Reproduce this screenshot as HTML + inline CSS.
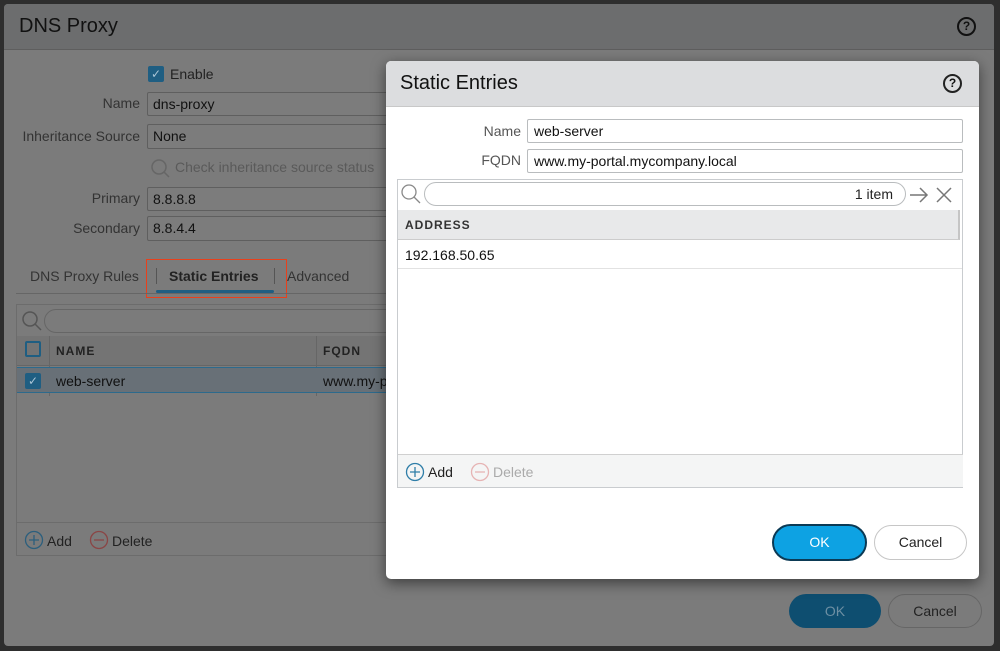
<!DOCTYPE html>
<html><head><style>
*{box-sizing:border-box;margin:0;padding:0}
body{width:1000px;height:651px;background:#2e2e2e;font-family:"Liberation Sans",sans-serif;position:relative;overflow:hidden;color:#111}
.abs{position:absolute}
#main{left:4px;top:4px;width:990px;height:642px;background:#7b7b7b;border-radius:4px;overflow:hidden}
#mhead{left:0;top:0;width:990px;height:46px;background:#6c6d6e;border-bottom:1px solid #5e5e5e}
.lbl{font-size:14px;color:#333;text-align:right}
.inp{background:#7c7c7c;border:1px solid #5f5f5f;border-radius:2px;font-size:14px;padding:3px 5px;color:#111}
.q{width:19px;height:19px;border:2px solid #222;border-radius:50%;font-size:12px;font-weight:bold;text-align:center;line-height:15px}
#modal{left:386px;top:61px;width:593px;height:518px;background:#fff;border-radius:5px;box-shadow:0 4px 14px rgba(0,0,0,.5);overflow:hidden}
#mh2{left:0;top:0;width:593px;height:46px;background:#dcdddf;border-bottom:1px solid #c8c8c8}
.minp{background:#fff;border:1px solid #b9bcbe;border-radius:2px;font-size:14px;padding:3px 6px;color:#111;height:24px}
</style></head><body>
<div id="main" class="abs">
 <div id="mhead" class="abs"><div class="abs" style="left:15px;top:11px;font-size:20px;color:#111">DNS Proxy</div>
 <div class="abs q" style="left:953px;top:13px;border-color:#111;color:#111">?</div></div>
 <div class="abs" style="left:144px;top:62px;width:16px;height:16px;background:#1f5e82;border-radius:2px;color:#a9c4d6;font-size:12px;text-align:center;line-height:16px">✓</div>
 <div class="abs" style="left:166px;top:62px;font-size:14px;color:#222">Enable</div>
 <div class="abs lbl" style="left:0;top:91px;width:136px">Name</div>
 <div class="abs inp" style="left:143px;top:88px;width:260px;height:24px">dns-proxy</div>
 <div class="abs lbl" style="left:0;top:124px;width:136px">Inheritance Source</div>
 <div class="abs inp" style="left:143px;top:120px;width:260px;height:25px">None</div>
 <svg class="abs" style="left:146px;top:154px" width="22" height="22"><circle cx="9" cy="9" r="7" fill="none" stroke="#666" stroke-width="1.5"/><line x1="14" y1="14" x2="19" y2="19" stroke="#666" stroke-width="1.5"/></svg>
 <div class="abs" style="left:171px;top:155px;font-size:14px;color:#5a5a5a">Check inheritance source status</div>
 <div class="abs lbl" style="left:0;top:186px;width:136px">Primary</div>
 <div class="abs inp" style="left:143px;top:183px;width:260px;height:24px">8.8.8.8</div>
 <div class="abs lbl" style="left:0;top:216px;width:136px">Secondary</div>
 <div class="abs inp" style="left:143px;top:212px;width:260px;height:25px">8.8.4.4</div>
 <div class="abs" style="left:26px;top:264px;font-size:14px;color:#333">DNS Proxy Rules</div>
 <div class="abs" style="left:152px;top:264px;width:1px;height:16px;background:#555"></div>
 <div class="abs" style="left:165px;top:264px;font-size:14px;font-weight:bold;color:#222">Static Entries</div>
 <div class="abs" style="left:152px;top:286px;width:118px;height:3px;background:#1f5e82;border-radius:2px"></div>
 <div class="abs" style="left:270px;top:264px;width:1px;height:16px;background:#555"></div>
 <div class="abs" style="left:283px;top:264px;font-size:14px;color:#333">Advanced</div>
 <div class="abs" style="left:142px;top:255px;width:141px;height:39px;border:1.5px solid #e8401c"></div>
 <div class="abs" style="left:12px;top:289px;width:380px;height:1px;background:#666"></div>
 <div class="abs" style="left:12px;top:300px;width:380px;height:252px;border:1px solid #6c6c6c"></div>
 <svg class="abs" style="left:16px;top:305px" width="24" height="24"><circle cx="10" cy="10" r="7" fill="none" stroke="#555" stroke-width="1.5"/><line x1="15" y1="15" x2="21" y2="21" stroke="#555" stroke-width="1.5"/></svg>
 <div class="abs" style="left:40px;top:305px;width:360px;height:24px;border:1px solid #666;border-radius:12px"></div>
 <div class="abs" style="left:13px;top:332px;width:380px;height:30px;background:#747474;border-bottom:1px solid #666"></div>
 <div class="abs" style="left:45px;top:332px;width:1px;height:60px;background:#666"></div>
 <div class="abs" style="left:312px;top:332px;width:1px;height:60px;background:#666"></div>
 <div class="abs" style="left:21px;top:337px;width:16px;height:16px;border:2px solid #1f5e82;border-radius:2px"></div>
 <div class="abs" style="left:52px;top:340px;font-size:12px;letter-spacing:1px;font-weight:bold;color:#222">NAME</div>
 <div class="abs" style="left:319px;top:340px;font-size:12px;letter-spacing:1px;font-weight:bold;color:#222">FQDN</div>
 <div class="abs" style="left:13px;top:363px;width:380px;height:26px;background:#687077;border-bottom:1px solid #2d6a8c;border-top:1px solid #2d6a8c"></div>
 <div class="abs" style="left:21px;top:369px;width:16px;height:16px;background:#1f5e82;border-radius:2px;color:#a9c4d6;font-size:12px;text-align:center;line-height:16px">✓</div>
 <div class="abs" style="left:52px;top:369px;font-size:14px;color:#111">web-server</div>
 <div class="abs" style="left:319px;top:369px;font-size:14px;color:#111">www.my-p</div>
 <div class="abs" style="left:13px;top:518px;width:380px;height:1px;background:#6c6c6c"></div>
 <svg class="abs" style="left:20px;top:526px" width="20" height="20"><circle cx="10" cy="10" r="8.5" fill="none" stroke="#2c5f7d" stroke-width="1.3"/><path d="M10 5v10M5 10h10" stroke="#2c5f7d" stroke-width="1.3"/></svg>
 <div class="abs" style="left:43px;top:529px;font-size:14px;color:#222">Add</div>
 <svg class="abs" style="left:85px;top:526px" width="20" height="20"><circle cx="10" cy="10" r="8.5" fill="none" stroke="#8a4545" stroke-width="1.3"/><path d="M5 10h10" stroke="#8a4545" stroke-width="1.3"/></svg>
 <div class="abs" style="left:108px;top:529px;font-size:14px;color:#222">Delete</div>
 <div class="abs" style="left:785px;top:590px;width:92px;height:34px;background:#0e4e70;border-radius:17px;color:#6d8fa3;font-size:14px;text-align:center;line-height:34px">OK</div>
 <div class="abs" style="left:884px;top:590px;width:94px;height:34px;border:1px solid #666;border-radius:17px;color:#222;font-size:14px;text-align:center;line-height:32px">Cancel</div>
</div>
<div id="modal" class="abs">
 <div id="mh2" class="abs"><div class="abs" style="left:14px;top:11px;font-size:20px;color:#111">Static Entries</div>
 <div class="abs q" style="left:557px;top:13px">?</div></div>
 <div class="abs" style="left:0;top:62px;width:135px;text-align:right;font-size:14px;color:#555">Name</div>
 <div class="abs minp" style="left:141px;top:58px;width:436px">web-server</div>
 <div class="abs" style="left:0;top:91px;width:135px;text-align:right;font-size:14px;color:#555">FQDN</div>
 <div class="abs minp" style="left:141px;top:88px;width:436px">www.my-portal.mycompany.local</div>
 <div class="abs" style="left:11px;top:118px;width:566px;height:309px;border:1px solid #c9cccf"></div>
 <svg class="abs" style="left:13px;top:121px" width="24" height="24"><circle cx="10" cy="10" r="7" fill="none" stroke="#888" stroke-width="1.3"/><line x1="15" y1="15" x2="21" y2="21" stroke="#888" stroke-width="1.3"/></svg>
 <div class="abs" style="left:38px;top:121px;width:482px;height:24px;border:1px solid #b9bcbe;border-radius:12px;font-size:14px;text-align:right;padding-right:12px;line-height:22px;color:#222">1 item</div>
 <svg class="abs" style="left:522px;top:124px" width="22" height="20"><path d="M2 10h17M12 3l7 7-7 7" fill="none" stroke="#777" stroke-width="1.5"/></svg>
 <svg class="abs" style="left:549px;top:125px" width="18" height="18"><path d="M2 2l14 14M16 2L2 16" stroke="#777" stroke-width="1.5"/></svg>
 <div class="abs" style="left:12px;top:149px;width:562px;height:30px;background:#e8e9ea;border-bottom:1px solid #ccc;border-right:2px solid #c5c5c5"></div>
 <div class="abs" style="left:19px;top:157px;font-size:12px;letter-spacing:1px;font-weight:bold;color:#333">ADDRESS</div>
 <div class="abs" style="left:12px;top:207px;width:564px;height:1px;background:#e2e2e2"></div>
 <div class="abs" style="left:19px;top:186px;font-size:14px;color:#111">192.168.50.65</div>
 <div class="abs" style="left:12px;top:393px;width:565px;height:33px;background:#f4f5f5;border-top:1px solid #d0d0d0"></div>
 <svg class="abs" style="left:19px;top:401px" width="20" height="20"><circle cx="10" cy="10" r="8.5" fill="none" stroke="#2f7ea8" stroke-width="1.3"/><path d="M10 5v10M5 10h10" stroke="#2f7ea8" stroke-width="1.3"/></svg>
 <div class="abs" style="left:42px;top:403px;font-size:14px;color:#222">Add</div>
 <svg class="abs" style="left:84px;top:401px" width="20" height="20"><circle cx="10" cy="10" r="8.5" fill="none" stroke="#e6b4b4" stroke-width="1.3"/><path d="M5 10h10" stroke="#e6b4b4" stroke-width="1.3"/></svg>
 <div class="abs" style="left:107px;top:403px;font-size:14px;color:#aaa">Delete</div>
 <div class="abs" style="left:386px;top:463px;width:95px;height:37px;background:#0da2e3;border:2px solid #0b3a55;border-radius:19px;color:#fff;font-size:14px;text-align:center;line-height:33px">OK</div>
 <div class="abs" style="left:488px;top:464px;width:93px;height:35px;border:1px solid #c6c6c6;border-radius:18px;color:#222;font-size:14px;text-align:center;line-height:33px">Cancel</div>
</div>
</body></html>
